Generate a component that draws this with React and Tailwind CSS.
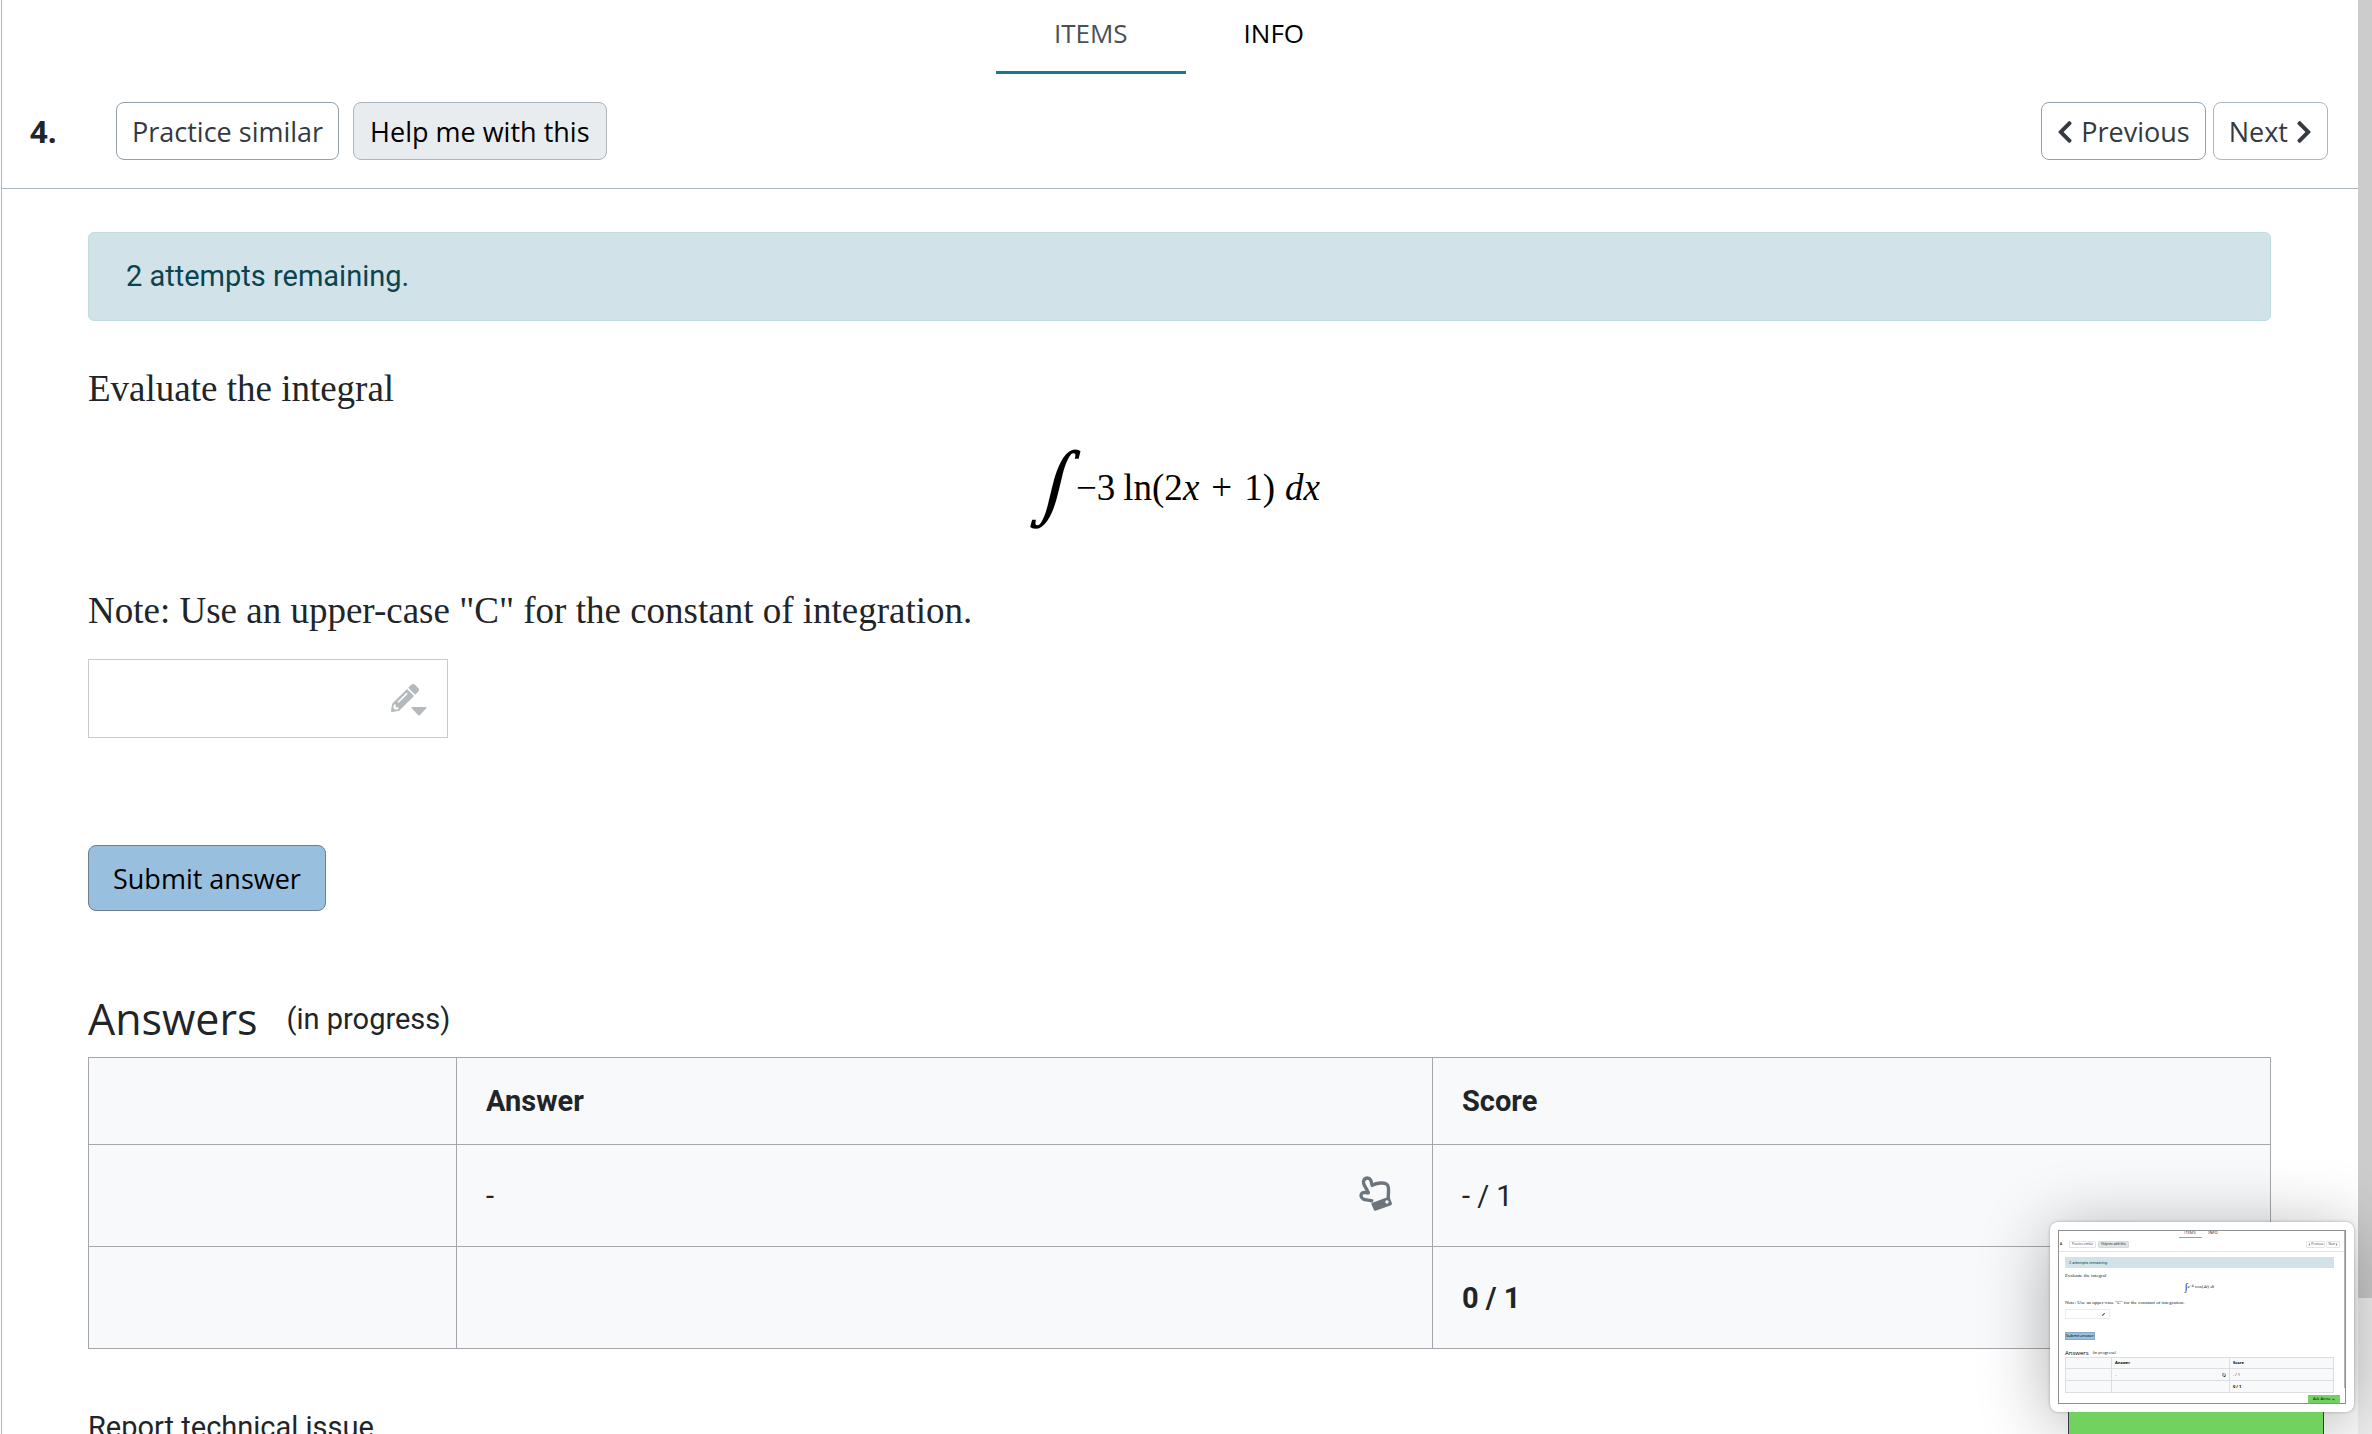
import { memo } from "react"
import clsx from "clsx"
import { FaChevronLeft, FaChevronRight, FaChevronUp, FaPencilAlt } from "react-icons/fa"

const TABS = [
  { label: "ITEMS", active: true },
  { label: "INFO", active: false },
];

const ROWS = [
  { answer: "-", score: "- / 1", hand: true },
  { answer: "", score: "0 / 1", bold: true },
];

// Pointing hand shown next to a submitted answer
const HandIcon = memo(({ className }) => (
  <svg viewBox="0 0 98 104" className={className} aria-hidden="true">
    <path
      d="M42 75C32 71 20 72 12 68C4 63 4 54 11 50C17 47 22 51 28 50C24 40 17 32 14 23C11 11 18 6 25 6C35 6 36 14 39 28C52 20 76 18 83 25C92 34 86 50 87 66"
      fill="none"
      stroke="currentColor"
      strokeWidth="10"
      strokeLinejoin="round"
    />
    <path
      fillRule="evenodd"
      fill="currentColor"
      d="M38 80L88 62Q91 62 92 65L98 82Q98 86 95 87L49 103Q45 104 44 100L37 84Q36 81 38 80ZM83 72a5 5 0 1 0 0.1 0Z"
    />
  </svg>
));

HandIcon.displayName = "HandIcon";

const Tabs = () => (
  <nav className="flex justify-center pr-0.5 text-[26px] leading-9">
    {TABS.map(({ label, active }) => (
      <a
        key={label}
        href="#"
        className={clsx(
          "border-b-3 px-[58px] pt-[15px] pb-5",
          active ? "border-[#117a8b] text-[#495057]" : "border-transparent text-black"
        )}
      >
        {label}
      </a>
    ))}
  </nav>
);

const ItemHeader = () => (
  <div className="flex items-center border-b border-[#adb5bd] py-7 pr-[30px] pl-7 text-[27px] leading-[38px] text-[#343a40]">
    <h1 className="w-[86px] text-[31px] font-bold text-[#212529]">4.</h1>
    <div className="flex gap-3.5">
      <button className="rounded-lg border border-[#939fab] px-[15px] pt-2.5 pb-2">Practice similar</button>
      <button className="rounded-lg border border-[#adb5bd] bg-[#e9ecef] px-4 pt-2.5 pb-2 text-black">Help me with this</button>
    </div>
    <div className="ml-auto flex gap-[7px]">
      <button className="flex items-center gap-2 rounded-lg border border-[#939fab] px-[15px] pt-2.5 pb-2">
        <FaChevronLeft className="h-[26px] w-4" />
        Previous
      </button>
      <button className="flex items-center gap-2 rounded-lg border border-[#adb5bd] px-[15px] pt-2.5 pb-2">
        Next
        <FaChevronRight className="h-[26px] w-4" />
      </button>
    </div>
  </div>
);

const Formula = () => (
  <div className="flex items-center justify-center pr-2.5 text-[37px] text-black">
    <span className="font-['DejaVu_Math_TeX_Gyre','Liberation_Serif',serif] text-[72px] leading-[80px] italic">∫</span>
    <span className="ml-1">−3</span>
    <span className="ml-2">ln(2<i>x</i></span>
    <span className="mx-3">+</span>
    <span>1)</span>
    <i className="ml-2.5">dx</i>
  </div>
);

const AnswersTable = () => (
  <table className="w-full table-fixed border-collapse bg-[#f8f9fb] text-left font-[Roboto,sans-serif] text-[29px] leading-[42px] text-[#212529]">
    <colgroup>
      <col className="w-[368px]" />
      <col />
      <col className="w-[838px]" />
    </colgroup>
    <thead>
      <tr className="h-[87px]">
        <th className="border border-[#a4a6a9]" />
        <th className="border border-[#a4a6a9] px-[29px] font-bold">Answer</th>
        <th className="border border-[#a4a6a9] px-[29px] font-bold">Score</th>
      </tr>
    </thead>
    <tbody>
      {ROWS.map((row) => (
        <tr key={row.score} className="h-[102px]">
          <td className="border border-[#a4a6a9]" />
          <td className="border border-[#a4a6a9] px-[29px]">
            <div className="flex items-center justify-between pr-[11px]">
              {row.answer}
              {row.hand && <HandIcon className="mb-1 h-[35px] w-[33px] text-[#6c757d]" />}
            </div>
          </td>
          <td className={clsx("border border-[#a4a6a9] px-[29px]", row.bold && "font-bold")}>{row.score}</td>
        </tr>
      ))}
    </tbody>
  </table>
);

// Small floating preview of a captured screen
const CapturePreview = () => (
  <div className="absolute right-[18px] bottom-[22px] w-[304px] rounded-lg bg-white p-2 shadow-[0_0_3px_rgba(0,0,0,0.3),0_10px_70px_rgba(0,0,0,0.32)]">
    <div className="flex h-[174px] justify-between overflow-hidden border border-[#8e8f91] bg-white text-[4px] leading-[4px] text-[#343a40]">
      <div className="relative min-w-0 flex-1">
        <div className="flex justify-center">
          <span className="w-[23px] border-b border-[#6fb0bb] pb-0.5 text-center">ITEMS</span>
          <span className="w-[23px] text-center text-black">INFO</span>
        </div>
        <div className="flex items-center border-b border-[#e3e5e8] py-[3px] pr-1 pl-px text-[3px] leading-[5px]">
          <b className="w-[9px] text-black">4.</b>
          <span className="rounded-[1px] border border-[#e3e5e8] px-0.5">Practice similar</span>
          <span className="ml-0.5 rounded-[1px] border border-[#d5d8dc] bg-[#e1e4e8] px-0.5 text-black">Help me with this</span>
          <span className="ml-auto flex items-center rounded-[1px] border border-[#e3e5e8] px-px">
            <FaChevronLeft className="size-[3px]" />
            Previous
          </span>
          <span className="ml-px flex items-center rounded-[1px] border border-[#e3e5e8] px-px">
            Next
            <FaChevronRight className="size-[3px]" />
          </span>
        </div>
        <div className="pt-[5px] pr-[10px] pl-1.5">
          <div className="bg-[#d1e3e9] px-1 py-[3px] font-[Roboto,sans-serif] leading-[5px] text-[#0c4350]">2 attempts remaining.</div>
          <div className="font-['Liberation_Serif',serif] text-[5px] leading-[6px] text-[#212529]">
            <p className="mt-[5px]">Evaluate the integral</p>
            <p className="mt-[5px] flex items-center justify-center">
              <span className="text-[10px] italic">∫</span>
              <span><i>e</i><sup className="text-[3px]">−4<i>t</i></sup> cos(4<i>t</i>) <i>dt</i></span>
            </p>
            <p className="mt-[10px]">Note: Use an upper-case "C" for the constant of integration.</p>
          </div>
          <div className="mt-[3px] flex h-[10px] w-[45px] items-center justify-end border border-[#ebebec] pr-1">
            <FaPencilAlt className="size-[3px]" />
          </div>
          <div className="mt-[13px] h-2 w-[30px] border border-[#86a9c4] bg-[#98bfde] text-center leading-[6px] text-black">Submit answer</div>
          <div className="mt-[9px] flex h-2 items-center gap-1 text-black">
            <span className="text-[6px]">Answers</span>
            <span>(in progress)</span>
          </div>
          <div className="grid grid-cols-[45px_1fr_103px] gap-px border border-[#dcdee0] bg-[#dcdee0] text-black *:bg-[#f8f9fb] *:px-[3px]">
            <span className="h-[10px]" />
            <b className="leading-[10px]">Answer</b>
            <b className="leading-[10px]">Score</b>
            <span className="h-[11px]" />
            <span className="flex items-center justify-between leading-[11px]">
              -
              <HandIcon className="size-1" />
            </span>
            <span className="leading-[11px]">- / 1</span>
            <span className="h-[11px]" />
            <span />
            <b className="leading-[11px]">0 / 1</b>
          </div>
        </div>
        <div className="absolute right-1 bottom-0 flex h-2 w-8 items-center justify-center gap-0.5 bg-[#72d25f] text-black">
          Ask Anna
          <FaChevronUp className="size-[3px]" />
        </div>
      </div>
      <div className="h-[157px] w-px bg-[#b4b4b4]" />
    </div>
  </div>
);

export default function App() {
  return (
    <div className="relative flex h-screen overflow-hidden bg-white font-['Open_Sans','Noto_Sans',sans-serif] text-[#212529]">
      <div className="ml-px min-w-0 flex-1 border-l border-[#adb5bd]">
        <Tabs />
        <ItemHeader />
        <main className="pt-[43px] pr-[87px] pl-[86px]">
          <div role="status" className="rounded-md border border-[#bedce2] bg-[#d1e3e9] px-[37px] py-[23px] font-[Roboto,sans-serif] text-[29px] leading-[41px] text-[#0c4350]">
            2 attempts remaining.
          </div>

          <div className="font-['Liberation_Serif',serif] text-[37px] leading-[54px] text-[#212529]">
            <p className="mt-[41px]">Evaluate the integral</p>
            <div className="mt-8">
              <Formula />
            </div>
            <p className="mt-14">
              <label htmlFor="answer">Note: Use an upper-case "C" for the constant of integration.</label>
            </p>
          </div>

          <div className="mt-[21px] flex h-[79px] w-[360px] items-center border border-[#c9cacb] pr-5">
            <input id="answer" className="h-full min-w-0 flex-1 px-4 text-[27px] outline-none" />
            <button aria-label="Open equation editor" className="flex items-end pt-0.5 text-[#b4b9bd]">
              <FaPencilAlt className="mb-1 size-7" />
              <svg viewBox="0 0 16 9" className="-ml-2 h-[9px] w-4" aria-hidden="true">
                <path d="M1 0H15Q16 0 15.500 1L9 8Q8 9 7 8L0.500 1Q0 0 1 0Z" fill="currentColor" />
              </svg>
            </button>
          </div>

          <button className="mt-[107px] rounded-lg border border-[#6c7f90] bg-[#98bfde] px-6 pt-3.5 pb-3 text-[27px] leading-[38px] text-black">
            Submit answer
          </button>

          <div className="mt-[78px] flex items-center gap-[29px]">
            <h2 className="text-[43px] leading-[60px]">Answers</h2>
            <span className="font-[Roboto,sans-serif] text-[29px] leading-[42px]">(in progress)</span>
          </div>
          <div className="mt-2">
            <AnswersTable />
          </div>

          <a href="#" className="mt-[57px] block font-[Roboto,sans-serif] text-[29px] leading-[42px]">Report technical issue</a>
        </main>
      </div>

      {/* scrollbar */}
      <div className="w-3.5 bg-[#f1f1f1]">
        <div className="h-[1298px] bg-[#cccccc]" />
      </div>

      <CapturePreview />
      <button aria-label="Ask Anna" className="absolute right-12 bottom-0 h-[22px] w-64 border-x border-[#343a40] bg-[#72d25f]" />
    </div>
  );
}
